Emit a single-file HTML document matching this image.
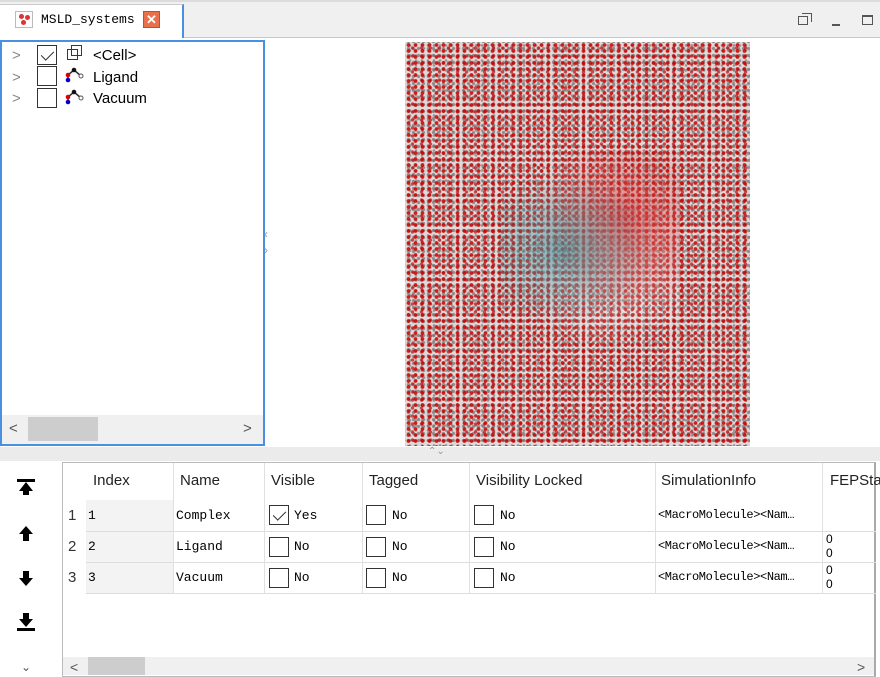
<!DOCTYPE html>
<html><head><style>
*{margin:0;padding:0;box-sizing:border-box}
body{width:880px;height:675px;background:#fff;font-family:"Liberation Sans","Noto Sans CJK SC",sans-serif;position:relative;overflow:hidden;font-size:14px;color:#000}
.abs{position:absolute}
.mono{font-family:"Liberation Mono","Noto Sans CJK SC",monospace}
.cb{position:absolute;width:20px;height:20px;border:1px solid #333;background:#fff}
.cb.chk::after{content:"";position:absolute;left:6px;top:2px;width:6px;height:11px;border:solid #333;border-width:0 1.5px 1.5px 0;transform:rotate(45deg)}
.th{position:absolute;top:472px;font-size:15px;color:#222}
.mol{background:
radial-gradient(circle,rgba(200,0,0,.85) 0 1.6px,transparent 2.2px) 0 0/7px 6px,
radial-gradient(circle,rgba(190,10,10,.7) 0 1.4px,transparent 2px) 3px 2px/9px 8px,
radial-gradient(circle,rgba(110,110,110,.7) 0 1.3px,transparent 2px) 1px 3px/5px 7px,
radial-gradient(circle,rgba(80,80,80,.5) 0 1px,transparent 1.6px) 2px 1px/6px 5px,
#e2d8d8}
</style></head><body>
<div class="abs" style="left:0;top:0;width:880px;height:38px;background:#f0f0f0;border-top:2px solid #dcdcdc;border-bottom:1px solid #c8c8c8"></div>
<div class="abs" style="left:0;top:4px;width:184px;height:34px;background:#fff;border-right:2px solid #4a90e2;border-top:1px solid #ccc"></div>
<div class="abs" style="left:15px;top:11px;width:18px;height:17px;border:1px solid #bbb;background:#fff"></div>
<div class="abs" style="left:19px;top:14px;width:5px;height:5px;border-radius:50%;background:#d33"></div>
<div class="abs" style="left:25px;top:15px;width:5px;height:5px;border-radius:50%;background:#d33"></div>
<div class="abs" style="left:21px;top:20px;width:5px;height:5px;border-radius:50%;background:#d33"></div>
<div class="abs mono" style="left:41px;top:12px;font-size:13px">MSLD_systems</div>
<div class="abs" style="left:143px;top:11px;width:17px;height:17px;background:#e8704a;border:1px solid #c44;color:#fff;font-size:13px;font-weight:bold;text-align:center;line-height:15px">✕</div>
<div class="abs" style="left:798px;top:16px;width:10px;height:9px;border:1.5px solid #555;background:#f0f0f0"></div>
<div class="abs" style="left:802px;top:13px;width:10px;height:9px;border:1.5px solid #555;border-left:none;border-bottom:none"></div>
<div class="abs" style="left:832px;top:24px;width:8px;height:2px;background:#555"></div>
<div class="abs" style="left:862px;top:15px;width:11px;height:10px;border:1.5px solid #555;border-top-width:2.5px"></div>
<div class="abs" style="left:0;top:40px;width:265px;height:406px;border:2px solid #4a90e2;background:#fff"></div>
<div class="abs" style="left:12px;top:45px;color:#888;font-size:15px;line-height:21.5px">&gt;<br>&gt;<br>&gt;</div>
<div class="cb chk" style="left:37px;top:45px"></div>
<div class="cb" style="left:37px;top:66px"></div>
<div class="cb" style="left:37px;top:88px"></div>
<div class="abs" style="left:67px;top:49px;width:11px;height:11px;border:1.5px solid #22d"></div>
<div class="abs" style="left:71px;top:45px;width:11px;height:11px;border:1.5px solid #22d"></div>
<svg class="abs" style="left:64px;top:67px" width="22" height="42"><g stroke="#333" stroke-width="1.5"><line x1="4" y1="8" x2="10" y2="3"/><line x1="10" y1="3" x2="17" y2="9"/><line x1="4" y1="8" x2="4" y2="13"/><line x1="4" y1="30" x2="10" y2="25"/><line x1="10" y1="25" x2="17" y2="31"/><line x1="4" y1="30" x2="4" y2="35"/></g><circle cx="4" cy="8" r="2.3" fill="#d00"/><circle cx="10" cy="3" r="2.3" fill="#111"/><circle cx="4" cy="13" r="2.3" fill="#00c"/><circle cx="17" cy="9" r="2" fill="#fff" stroke="#555"/><circle cx="4" cy="30" r="2.3" fill="#d00"/><circle cx="10" cy="25" r="2.3" fill="#111"/><circle cx="4" cy="35" r="2.3" fill="#00c"/><circle cx="17" cy="31" r="2" fill="#fff" stroke="#555"/></svg>
<div class="abs" style="left:93px;top:45px;font-size:15px;line-height:21.5px">&lt;Cell&gt;<br>Ligand<br>Vacuum</div>
<div class="abs" style="left:2px;top:415px;width:261px;height:29px;background:#f0f0f0"></div>
<div class="abs" style="left:28px;top:417px;width:70px;height:24px;background:#cdcdcd"></div>
<div class="abs" style="left:9px;top:420px;color:#555;font-size:15px">&lt;</div>
<div class="abs" style="left:243px;top:420px;color:#555;font-size:15px">&gt;</div>
<div class="abs" style="left:264px;top:226px;color:#999;font-size:12px;line-height:16px">‹<br>›</div>
<div class="abs mol" style="left:405px;top:42px;width:345px;height:404px"></div>
<div class="abs" style="left:500px;top:150px;width:180px;height:200px;background:radial-gradient(ellipse at 35% 50%,rgba(20,130,140,.5),transparent 55%),radial-gradient(ellipse at 70% 35%,rgba(210,0,0,.45),transparent 50%),radial-gradient(ellipse at 60% 50%,rgba(255,255,255,.4),transparent 70%)"></div>
<div class="abs" style="left:0;top:447px;width:880px;height:14px;background:#ebebeb"></div>
<div class="abs" style="left:428px;top:446px;color:#999;font-size:10px">⌃⌄</div>
<div class="abs" style="left:17px;top:479px;width:18px;height:3px;background:#000"></div>
<div class="abs" style="left:19px;top:482px;width:0;height:0;border-left:7px solid transparent;border-right:7px solid transparent;border-bottom:9px solid #000"></div>
<div class="abs" style="left:23px;top:489px;width:6px;height:6px;background:#000"></div>
<div class="abs" style="left:19px;top:526px;border-left:7px solid transparent;border-right:7px solid transparent;border-bottom:8px solid #000"></div>
<div class="abs" style="left:23px;top:533px;width:6px;height:8px;background:#000"></div>
<div class="abs" style="left:23px;top:571px;width:6px;height:8px;background:#000"></div>
<div class="abs" style="left:19px;top:578px;border-left:7px solid transparent;border-right:7px solid transparent;border-top:8px solid #000"></div>
<div class="abs" style="left:23px;top:613px;width:6px;height:6px;background:#000"></div>
<div class="abs" style="left:19px;top:619px;border-left:7px solid transparent;border-right:7px solid transparent;border-top:8px solid #000"></div>
<div class="abs" style="left:17px;top:628px;width:18px;height:3px;background:#000"></div>
<div class="abs" style="left:21px;top:660px;color:#555;font-size:12px">⌄</div>
<div class="abs" style="left:62px;top:462px;width:814px;height:215px;border:1px solid #bbb;border-right:2px solid #aaa;background:#fff"></div>
<div class="abs" style="left:86px;top:500px;width:87px;height:93px;background:#f3f3f3"></div>
<div class="abs" style="left:86px;top:531px;width:790px;height:1px;background:#ddd"></div>
<div class="abs" style="left:86px;top:562px;width:790px;height:1px;background:#ddd"></div>
<div class="abs" style="left:86px;top:593px;width:790px;height:1px;background:#ddd"></div>
<div class="abs" style="left:173px;top:463px;width:1px;height:131px;background:#e0e0e0"></div>
<div class="abs" style="left:264px;top:463px;width:1px;height:131px;background:#e0e0e0"></div>
<div class="abs" style="left:362px;top:463px;width:1px;height:131px;background:#e0e0e0"></div>
<div class="abs" style="left:469px;top:463px;width:1px;height:131px;background:#e0e0e0"></div>
<div class="abs" style="left:655px;top:463px;width:1px;height:131px;background:#e0e0e0"></div>
<div class="abs" style="left:822px;top:463px;width:1px;height:131px;background:#e0e0e0"></div>
<div class="th" style="left:93px">Index</div>
<div class="th" style="left:180px">Name</div>
<div class="th" style="left:271px">Visible</div>
<div class="th" style="left:369px">Tagged</div>
<div class="th" style="left:476px">Visibility Locked</div>
<div class="th" style="left:661px">SimulationInfo</div>
<div class="th" style="left:830px">FEPSta</div>
<div class="abs" style="left:68px;top:500px;font-size:15px;line-height:31px;color:#333">1<br>2<br>3</div>
<div class="abs mono" style="left:88px;top:500px;font-size:13px;line-height:31px">1<br>2<br>3</div>
<div class="abs mono" style="left:176px;top:500px;font-size:13px;line-height:31px">Complex<br>Ligand<br>Vacuum</div>
<div class="cb chk" style="left:269px;top:505px"></div><div class="cb" style="left:269px;top:537px"></div><div class="cb" style="left:269px;top:568px"></div>
<div class="cb" style="left:366px;top:505px"></div><div class="cb" style="left:366px;top:537px"></div><div class="cb" style="left:366px;top:568px"></div>
<div class="cb" style="left:474px;top:505px"></div><div class="cb" style="left:474px;top:537px"></div><div class="cb" style="left:474px;top:568px"></div>
<div class="abs mono" style="left:294px;top:500px;font-size:13px;line-height:31px">Yes<br>No<br>No</div>
<div class="abs mono" style="left:392px;top:500px;font-size:13px;line-height:31px">No<br>No<br>No</div>
<div class="abs mono" style="left:500px;top:500px;font-size:13px;line-height:31px">No<br>No<br>No</div>
<div class="abs mono" style="left:658px;top:500px;font-size:12px;line-height:31px;letter-spacing:-0.4px">&lt;MacroMolecule&gt;&lt;Nam…<br>&lt;MacroMolecule&gt;&lt;Nam…<br>&lt;MacroMolecule&gt;&lt;Nam…</div>
<div class="abs" style="left:826px;top:532px;font-size:12px;line-height:14px">0<br>0</div>
<div class="abs" style="left:826px;top:563px;font-size:12px;line-height:14px">0<br>0</div>
<div class="abs" style="left:63px;top:657px;width:811px;height:18px;background:#f0f0f0"></div>
<div class="abs" style="left:88px;top:657px;width:57px;height:18px;background:#cdcdcd"></div>
<div class="abs" style="left:70px;top:659px;color:#555;font-size:14px">&lt;</div>
<div class="abs" style="left:857px;top:659px;color:#555;font-size:14px">&gt;</div>
</body></html>
